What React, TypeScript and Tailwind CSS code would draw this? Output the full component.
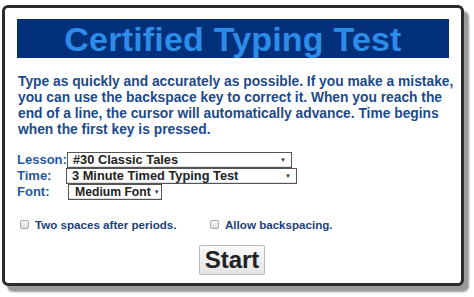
function Select({
  text,
  width,
  pad = "pl-[5px] pr-[5px]",
  size = "text-[12.8px]",
}: {
  text: string;
  width: string;
  pad?: string;
  size?: string;
}) {
  return (
    <div
      className={`${width} ${pad} ${size} shrink-0 h-[16px] border border-[#555] bg-white flex items-center justify-between gap-[3px] font-bold text-[#222] leading-none whitespace-nowrap shadow-[inset_0_-1px_0_#ddd]`}
    >
      <span>{text}</span>
      <span className="text-[6px] text-[#333]">▼</span>
    </div>
  );
}

function Check({ label }: { label: string }) {
  return (
    <div className="flex items-center gap-[6px]">
      <span className="w-[9px] h-[9px] rounded-[2px] border border-[#aaa] bg-gradient-to-b from-[#f5f5f5] to-[#ddd]" />
      <span className="text-[11.6px] font-bold text-[#1c3f7a] whitespace-nowrap">{label}</span>
    </div>
  );
}

export default function App() {
  return (
    <div
      className="w-[474px] h-[297px] bg-white pl-[2px] pt-[5px]"
      style={{ fontFamily: '"Liberation Sans", Arial, sans-serif' }}
    >
      <div className="w-[462px] h-[281px] border-[3px] border-[#2b2b2b] rounded-[6px] bg-white shadow-[5px_6px_2px_#9a9a9a] px-[12px] pt-[11px]">
        <div className="h-[39px] bg-[#03307a] flex items-center justify-center">
          <h1 className="text-[34px] font-bold text-[#2c8ce8] leading-none tracking-[0.2px]">
            Certified Typing Test
          </h1>
        </div>

        <p className="mt-[16px] text-[13.8px] font-bold leading-[16px] text-[#1b4a8c] pl-[1px] whitespace-nowrap">
          Type as quickly and accurately as possible. If you make a mistake,
          <br />
          you can use the backspace key to correct it. When you reach the
          <br />
          end of a line, the cursor will automatically advance. Time begins
          <br />
          when the first key is pressed.
        </p>

        <div className="mt-[14px] flex flex-col text-[13px] font-bold text-[#1f5aa3]">
          <div className="flex items-center h-[16px]">
            <span className="w-[50px]">Lesson:</span>
            <Select text="#30 Classic Tales" width="w-[225px]" />
          </div>
          <div className="flex items-center h-[16px]">
            <span className="w-[49px]">Time:</span>
            <Select text="3 Minute Timed Typing Test" width="w-[231px]" />
          </div>
          <div className="flex items-center h-[16px]">
            <span className="w-[51px]">Font:</span>
            <Select text="Medium Font" width="w-[94px]" pad="pl-[6px] pr-[4px]" size="text-[12.2px]" />
          </div>
        </div>

        <div className="mt-[16px] flex pl-[3px]">
          <div className="w-[190px]">
            <Check label="Two spaces after periods." />
          </div>
          <Check label="Allow backspacing." />
        </div>

        <div className="mt-[12px] flex justify-center pr-[2px]">
          <button className="h-[30px] px-[5px] border border-[#bbb] rounded-[2px] bg-gradient-to-b from-[#fafafa] to-[#e4e4e4] text-[24px] font-bold text-[#222] leading-none">
            Start
          </button>
        </div>
      </div>
    </div>
  );
}
